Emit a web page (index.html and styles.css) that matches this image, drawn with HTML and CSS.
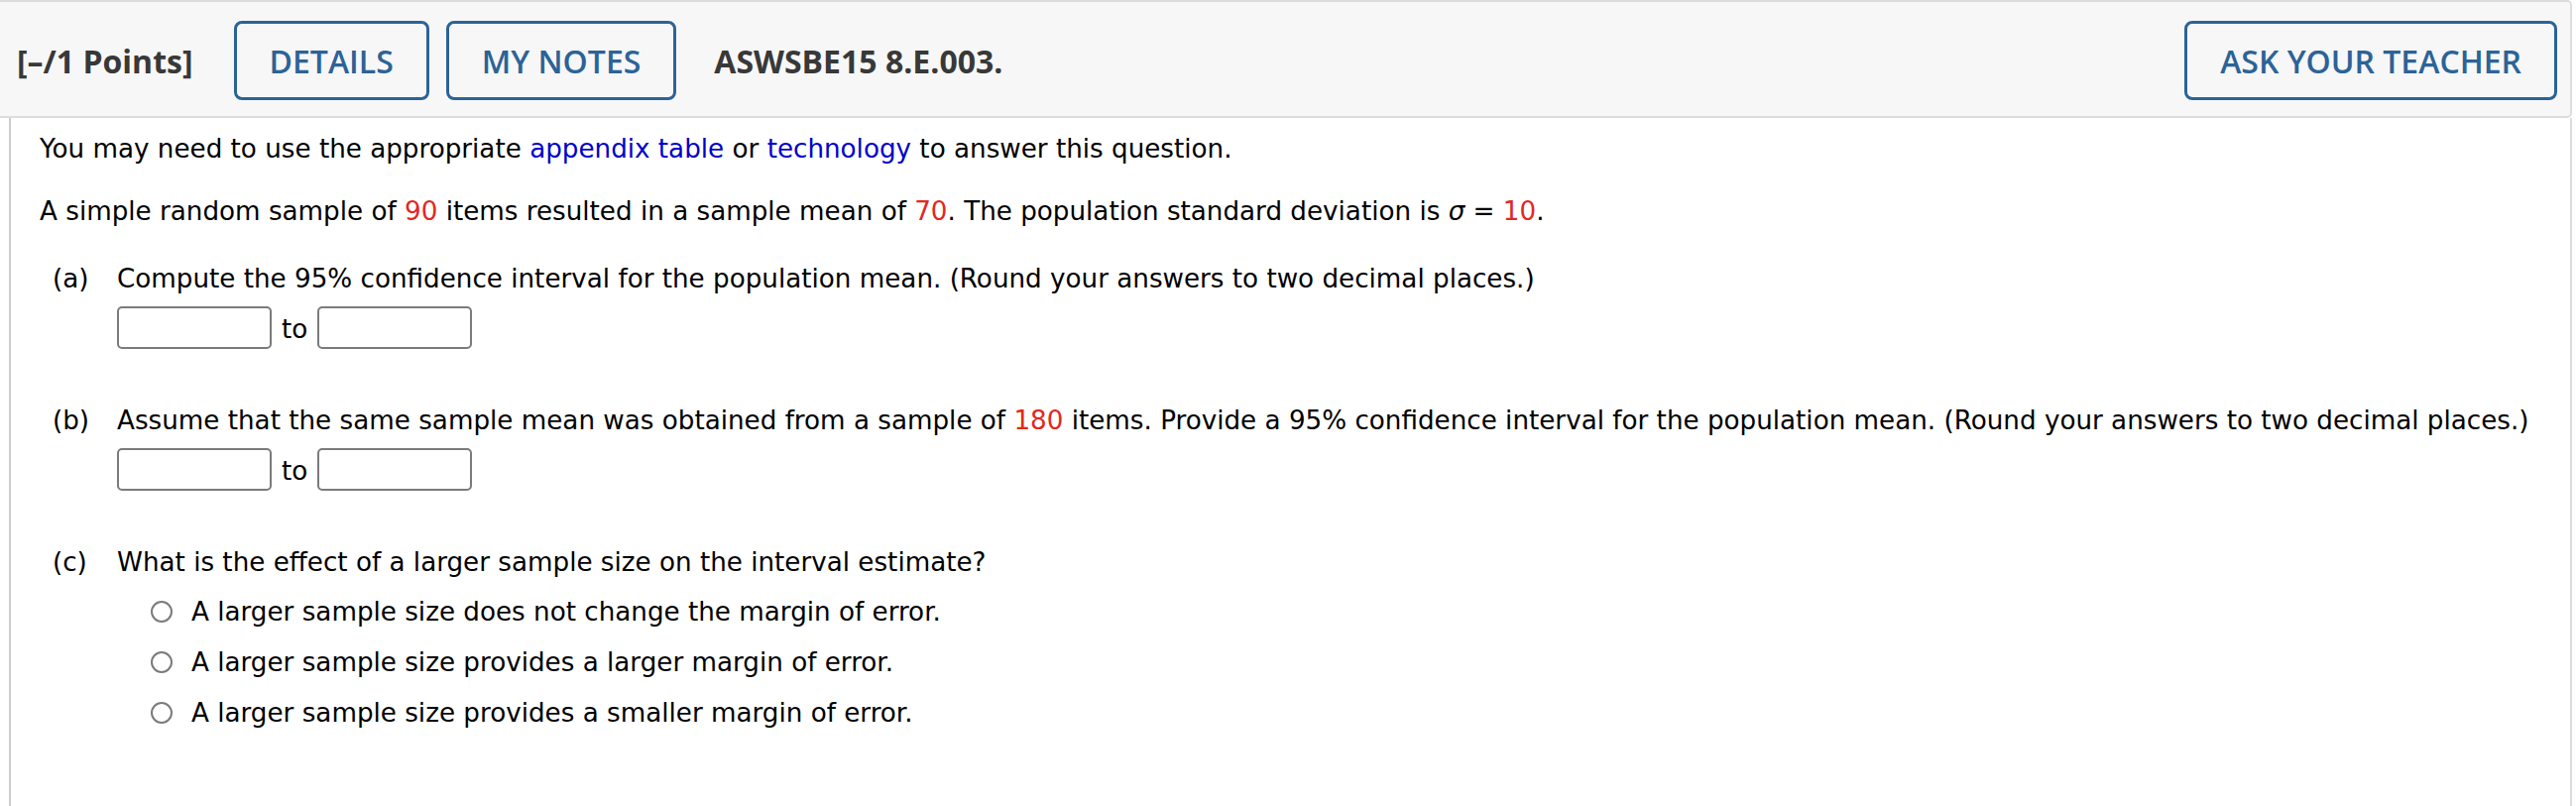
FILE: index.html
```html
<!DOCTYPE html>
<html lang="en">
<head>
<meta charset="utf-8">
<title>ASWSBE15 8.E.003.</title>
<link rel="stylesheet" href="styles.css">
</head>
<body>
<div class="page">
  <header class="qhead">
    <span class="points">[–/1 Points]</span>
    <button class="btn btn-details" type="button">DETAILS</button>
    <button class="btn btn-notes" type="button">MY NOTES</button>
    <span class="qid">ASWSBE15 8.E.003.</span>
    <span class="spacer"></span>
    <button class="btn btn-ask" type="button">ASK YOUR TEACHER</button>
  </header>
  <main class="qbody">
    <p class="line l1">You may need to use the appropriate <a class="link" href="#">appendix table</a> or <a class="link" href="#">technology</a> to answer this question.</p>
    <p class="line l2">A simple random sample of <span class="num">90</span> items resulted in a sample mean of <span class="num">70</span>. The population standard deviation is <i class="sym">σ</i> = <span class="num">10</span>.</p>

    <section class="part part-a">
      <div class="part-q"><span class="part-label">(a)</span><span class="part-text">Compute the 95% confidence interval for the population mean. (Round your answers to two decimal places.)</span></div>
      <div class="answers"><input class="box" type="text"><span class="to">to</span><input class="box" type="text"></div>
    </section>

    <section class="part part-b">
      <div class="part-q"><span class="part-label">(b)</span><span class="part-text">Assume that the same sample mean was obtained from a sample of <span class="num">180</span> items. Provide a 95% confidence interval for the population mean. (Round your answers to two decimal places.)</span></div>
      <div class="answers"><input class="box" type="text"><span class="to">to</span><input class="box" type="text"></div>
    </section>

    <section class="part part-c">
      <div class="part-q"><span class="part-label">(c)</span><span class="part-text">What is the effect of a larger sample size on the interval estimate?</span></div>
      <div class="choices">
        <label class="choice"><span class="radio"></span><span>A larger sample size does not change the margin of error.</span></label>
        <label class="choice"><span class="radio"></span><span>A larger sample size provides a larger margin of error.</span></label>
        <label class="choice"><span class="radio"></span><span>A larger sample size provides a smaller margin of error.</span></label>
      </div>
    </section>
  </main>
</div>
</body>
</html>
```
FILE: styles.css
```css
html, body {
  margin: 0;
  padding: 0;
  background: #ffffff;
}

.page {
  width: 2594px;
}

/* ---------- header bar ---------- */
.qhead {
  display: flex;
  align-items: center;
  box-sizing: border-box;
  height: 119px;
  padding: 3px 13px 0 17px;
  background: #f7f7f7;
  border: 2px solid #dddddd;
  border-left: none;
  border-radius: 0 5px 5px 0;
  font-family: "Open Sans", "Liberation Sans", sans-serif;
}

.points,
.qid {
  font-size: 32px;
  font-weight: 700;
  color: #383838;
  white-space: nowrap;
}

.points {
  margin-right: 41px;
}

.qid {
  margin-left: 38px;
}

.spacer {
  flex: 1;
}

.btn {
  display: flex;
  align-items: center;
  box-sizing: border-box;
  height: 80px;
  padding: 0 33px;
  background: transparent;
  border: 3px solid #2c6397;
  border-radius: 8px;
  color: #2c6397;
  font-family: "Open Sans", "Liberation Sans", sans-serif;
  font-size: 32px;
  font-weight: 600;
  white-space: nowrap;
}

.btn-notes {
  margin-left: 17px;
}

/* ---------- question body ---------- */
.qbody {
  box-sizing: border-box;
  min-height: 694px;
  margin-left: 9px;
  padding: 15px 0 0 29px;
  border-left: 2px solid #cccccc;
  border-right: 2px solid #dddddd;
  font-family: "DejaVu Sans", Verdana, sans-serif;
  font-size: 26.2px;
  line-height: 32px;
  color: #000000;
}

.line {
  margin: 0;
  white-space: nowrap;
}

.l2 {
  margin-top: 31px;
}

.link {
  color: #0000cc;
  text-decoration: none;
}

.num {
  color: #e3281f;
}

.sym {
  font-style: italic;
}

.part {
  margin-top: 56px;
}

.part-a {
  margin-top: 36px;
}

.part-q {
  display: flex;
  padding-left: 13px;
  white-space: nowrap;
}

.part-label {
  width: 65px;
  flex: none;
}

.answers {
  display: flex;
  align-items: center;
  margin-top: 12px;
  padding-left: 78px;
}

.box {
  box-sizing: border-box;
  width: 156px;
  height: 43px;
  margin: 0;
  padding: 0 8px;
  border: 2px solid #7b7b7b;
  border-radius: 5px;
  background: #ffffff;
  font: inherit;
}

.to {
  margin: 0 10px 0 10px;
  position: relative;
  top: 1px;
}

.choices {
  display: flex;
  flex-direction: column;
  gap: 19px;
  margin-top: 18px;
  padding-left: 112px;
}

.choice {
  display: flex;
  align-items: center;
  height: 32px;
  white-space: nowrap;
}

.radio {
  box-sizing: border-box;
  width: 22px;
  height: 22px;
  margin-right: 19px;
  border: 2px solid #7b7b7b;
  border-radius: 50%;
  background: #ffffff;
  flex: none;
}
```
